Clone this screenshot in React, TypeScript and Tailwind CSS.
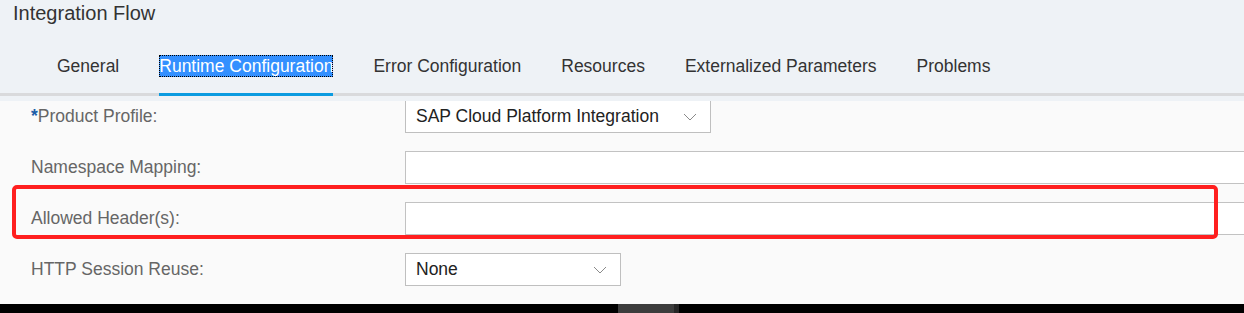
import { ReactNode } from 'react'

const tabs = [
  'General',
  'Runtime Configuration',
  'Error Configuration',
  'Resources',
  'Externalized Parameters',
  'Problems',
]

const Chevron = () => (
  <svg width="14" height="8" viewBox="0 0 14 8" className="shrink-0">
    <path d="M1 1l6 6 6-6" fill="none" stroke="#8a8a8a" strokeWidth="1" />
  </svg>
)

const Select = ({ value, width }: { value: string; width: string }) => (
  <div
    className={`${width} flex h-[33px] items-center justify-between border border-[#bfbfbf] bg-white pl-[10px] pr-[13px] text-[#222]`}
  >
    <span>{value}</span>
    <Chevron />
  </div>
)

const Input = () => (
  <div className="h-[33px] w-[860px] shrink-0 border border-[#c2c2c2] bg-white" />
)

const Row = ({
  label,
  children,
  required = false,
  highlight = false,
}: {
  label: string
  children: ReactNode
  required?: boolean
  highlight?: boolean
}) => (
  <div className="relative flex h-[33px] items-center">
    <div className="w-[405px] shrink-0 pl-[31px] text-[#666]">
      {required && <span className="font-bold text-[#1d5ea8]">*</span>}
      {label}
    </div>
    {children}
    {highlight && (
      <div className="absolute -top-[17px] left-[12px] h-[54px] w-[1206px] rounded-[5px] border-[4px] border-[#ff1f1f]" />
    )}
  </div>
)

export default function App() {
  return (
    <div className="flex h-[313px] w-[1244px] flex-col overflow-hidden font-['Liberation_Sans',Arial,sans-serif] text-[17.5px]">
      <div className="shrink-0 bg-[#eef2f6]">
        <div className="pl-[13px] pt-[1px] text-[20px] leading-[24px] text-[#333]">
          Integration Flow
        </div>
        <div className="mt-[30px] flex gap-[40px] border-b-[3px] border-[#d9dadc] pl-[57px]">
          {tabs.map((tab) => {
            const active = tab === 'Runtime Configuration'
            return (
              <div
                key={tab}
                className={`-mb-[3px] border-b-[3px] pb-[16px] ${
                  active ? 'border-[#0b9be0]' : 'border-transparent'
                }`}
              >
                <span
                  className={`block leading-[22px] ${
                    active
                      ? 'bg-[#3390ff] text-white outline-1 -outline-offset-1 outline-dotted outline-black'
                      : 'text-[#333]'
                  }`}
                >
                  {tab}
                </span>
              </div>
            )
          })}
        </div>
        <div className="h-[5px]" />
      </div>

      <div className="h-[203px] shrink-0 overflow-hidden bg-[#fafafa]">
        <div className="-mt-[1px] flex flex-col gap-[18px]">
          <Row label="Product Profile:" required>
            <Select value="SAP Cloud Platform Integration" width="w-[306px]" />
          </Row>
          <Row label="Namespace Mapping:">
            <Input />
          </Row>
          <Row label="Allowed Header(s):" highlight>
            <Input />
          </Row>
          <Row label="HTTP Session Reuse:">
            <Select value="None" width="w-[216px]" />
          </Row>
        </div>
      </div>

      <div className="flex h-[9px] shrink-0 bg-black">
        <div className="ml-[618px] flex w-[61px] justify-end bg-[#3c3c3c]">
          <div className="w-[5px] bg-[#262626]" />
        </div>
      </div>
    </div>
  )
}
